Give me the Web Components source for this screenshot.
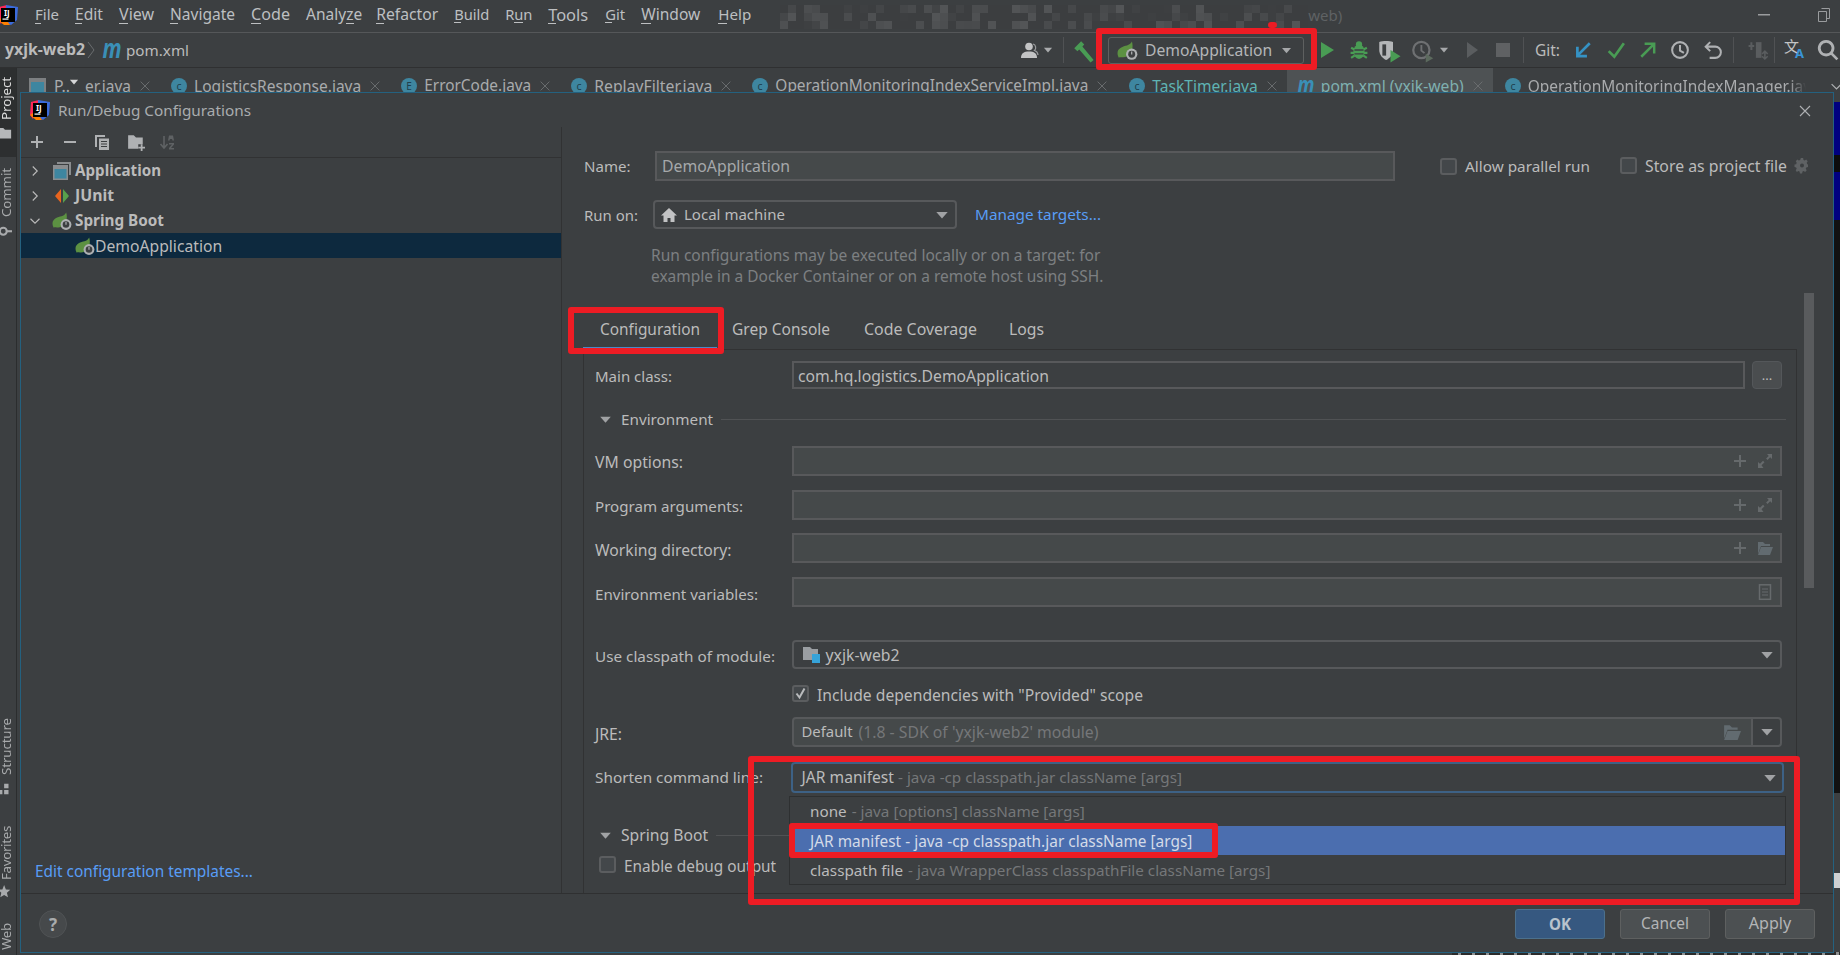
<!DOCTYPE html>
<html lang="en"><head><meta charset="utf-8"><title>Run/Debug Configurations</title>
<style>
html,body{margin:0;padding:0;width:1840px;height:955px;overflow:hidden;background:#3c3f41}
body{font:16px "Noto Sans",sans-serif;color:#bbb}
</style></head>
<body>
<ij-window>
  <ij-menubar></ij-menubar>
  <ij-navbar></ij-navbar>
  <ij-workspace></ij-workspace>

  <ij-dialog>
    <ij-t slot="title" w="193" fs="15.5" style="color:#a9acae">Run/Debug Configurations</ij-t>
    <ij-tree slot="left"></ij-tree>

    <ij-form slot="right">
      <ij-row lw="71" label="Name:" ltw="46.5" style="height:30px;margin:24px 0 0 1px">
        <ij-field style="width:740px;flex:none" bg="#45494a"><ij-t w="128" style="color:#a5a8aa;margin-left:1px">DemoApplication</ij-t></ij-field>
        <ij-check style="margin-left:45px" tw="125">Allow parallel run</ij-check>
        <ij-check style="margin-left:30px" tw="142">Store as project file</ij-check>
        <ij-icon name="gear" w="16" style="margin-left:7px;color:#5f6264"></ij-icon>
      </ij-row>
      <ij-row lw="69" label="Run on:" ltw="54" style="height:29px;margin:19px 0 0 1px">
        <ij-combo style="width:304px;flex:none" icon="home"><ij-t w="101" style="margin-left:1px">Local machine</ij-t></ij-combo>
        <ij-link style="margin-left:18px" tw="126">Manage targets...</ij-link>
      </ij-row>
      <ij-hint style="margin:16px 0 0 68px">
        <ij-t w="449" fs="15">Run configurations may be executed locally or on a target: for</ij-t>
        <ij-t w="452" fs="15">example in a Docker Container or on a remote host using SSH.</ij-t>
      </ij-hint>
      <ij-tabs></ij-tabs>
      <ij-panel>
        <ij-row lw="197" label="Main class:" ltw="77" ldy="1" style="height:28px">
          <ij-field><ij-t w="251" style="color:#bbb;margin-top:2px">com.hq.logistics.DemoApplication</ij-t></ij-field>
          <ij-morebtn></ij-morebtn>
        </ij-row>
        <ij-section tw="92" style="margin-top:20.5px">Environment</ij-section>
        <ij-row lw="197" label="VM options:" ltw="88" ldy="1" style="height:30px;margin-top:16.5px">
          <ij-field bg="#45494a"><ij-fieldicons slot="icons" a="plus" b="expand"></ij-fieldicons></ij-field>
        </ij-row>
        <ij-row lw="197" label="Program arguments:" ltw="148" ldy="1" style="height:30px;margin-top:14px">
          <ij-field bg="#45494a"><ij-fieldicons slot="icons" a="plus" b="expand"></ij-fieldicons></ij-field>
        </ij-row>
        <ij-row lw="197" label="Working directory:" ltw="136.5" ldy="2" style="height:30px;margin-top:13px">
          <ij-field bg="#45494a"><ij-fieldicons slot="icons" a="plus" b="folderopen"></ij-fieldicons></ij-field>
        </ij-row>
        <ij-row lw="197" label="Environment variables:" ltw="163" ldy="2" style="height:30px;margin-top:14px">
          <ij-field bg="#45494a"><ij-fieldicons slot="icons" b="clip"></ij-fieldicons></ij-field>
        </ij-row>
        <ij-row lw="197" label="Use classpath of module:" ltw="180" ldy="1" style="height:29px;margin-top:33px">
          <ij-combo icon="modfolder" arrow><ij-t w="74" style="margin:2px 0 0 -1px">yxjk-web2</ij-t></ij-combo>
        </ij-row>
        <ij-row lw="197" label="" style="height:17px;margin-top:16px">
          <ij-check checked tw="326" tdy="2">Include dependencies with "Provided" scope</ij-check>
        </ij-row>
        <ij-row lw="197" label="JRE:" ltw="27" ldy="2" style="height:30px;margin-top:15px">
          <ij-combo bg="#45494a" split>
            <ij-t w="51">Default</ij-t><ij-t w="240" style="color:#757779;margin-left:6px">(1.8 - SDK of 'yxjk-web2' module)</ij-t>
          </ij-combo>
        </ij-row>
        <ij-row lw="197" label="Shorten command line:" ltw="168" ldy="-1" style="height:31px;margin-top:15px">
          <ij-combo focus arrow>
            <ij-t w="92.5">JAR manifest</ij-t><ij-t w="284" style="color:#757779;margin-left:4px">- java -cp classpath.jar className [args]</ij-t>
          </ij-combo>
        </ij-row>
        <ij-section tw="87" style="margin-top:32px">Spring Boot</ij-section>
        <ij-row lw="4" label="" style="height:17px;margin-top:11px">
          <ij-check tw="152" tdy="3">Enable debug output</ij-check>
        </ij-row>
      </ij-panel>
    </ij-form>

    <ij-footer slot="footer"></ij-footer>
  </ij-dialog>

  <ij-popup>
    <ij-option><ij-t w="36.6">none</ij-t><ij-t w="233" style="color:#757779;margin-left:5px">- java [options] className [args]</ij-t></ij-option>
    <ij-option selected><ij-t w="382" style="color:#d4dbe8;margin-top:3px">JAR manifest - java -cp classpath.jar className [args]</ij-t></ij-option>
    <ij-option><ij-t w="93" style="margin-top:2px">classpath file</ij-t><ij-t w="362" style="color:#757779;margin:2px 0 0 5px">- java WrapperClass classpathFile className [args]</ij-t></ij-option>
  </ij-popup>

  <ij-mark style="left:1096px;top:28px;width:221px;height:42px"></ij-mark>
  <ij-mark style="left:1268px;top:22px;width:9px;height:6px;border-width:3px;background:#ed1c24"></ij-mark>
  <ij-mark style="left:568px;top:307px;width:156px;height:47px"></ij-mark>
  <ij-mark style="left:748px;top:756px;width:1052px;height:149px"></ij-mark>
  <ij-mark style="left:789px;top:823px;width:429px;height:35px"></ij-mark>
</ij-window>

<script>
const cv=document.createElement('canvas').getContext('2d');
const def=(tag,tpl,after)=>customElements.define(tag,class extends HTMLElement{
  connectedCallback(){
    if(this.shadowRoot)return;
    this.attachShadow({mode:'open'}).innerHTML=tpl(this);
    if(after)after(this);
  }
});

/* text that fits a measured width */
customElements.define('ij-t',class extends HTMLElement{
  connectedCallback(){
    if(this.shadowRoot)return;
    this.attachShadow({mode:'open'}).innerHTML='<style>:host{display:inline-block;white-space:pre;line-height:1.2;flex:none}</style><slot></slot>';
    const fs=+(this.getAttribute('fs')||16), b=this.hasAttribute('b')?700:400, w=+this.getAttribute('w'), s=this.textContent;
    let f=fs;
    if(w){
      cv.font=`${b} ${fs}px "Noto Sans"`;
      f=Math.max(fs*.92,Math.min(fs*1.06,fs*w/cv.measureText(s).width));
      cv.font=`${b} ${f}px "Noto Sans"`;
      this.style.letterSpacing=((w-cv.measureText(s).width)/s.length).toFixed(3)+'px';
    }
    this.style.fontSize=f.toFixed(2)+'px';
    if(b==700)this.style.fontWeight=700;
  }
});

const S=(d,x='')=>`<path d="${d}" fill="none" stroke="currentColor" ${x}/>`;
const ICONS={
 plus:S('M8 2v12M2 8h12','stroke-width="2"'),
 minus:S('M2 8h12','stroke-width="2"'),
 x:S('M3 3l10 10M13 3L3 13','stroke-width="1.1"'),
 tri:'<path d="M1.5 4.5h13L8 12z" fill="currentColor"/>',
 chevr:S('M5 2l6 6-6 6','stroke-width="1.5"'),
 chevd:S('M2 5l6 6 6-6','stroke-width="1.5"'),
 crumb:S('M5 0l6 8-6 8','stroke-width="1"'),
 copy:'<path d="M1 1h10v2H3v10H1z" fill="currentColor"/><path d="M5 4.5h10V16H5z" fill="currentColor"/><path d="M7 7h6v1H7zM7 9.5h6v1H7zM7 12h6v1H7z" fill="#3c3f41"/>',
 folderplus:'<path d="M1 2h5l2 2h6v6h-4v4H1z" fill="currentColor"/><path d="M13 10v6M10 13h6" stroke="currentColor" stroke-width="1.6"/>',
 sortaz:'<path d="M5 2v11M1.5 10l3.5 4 3.5-4" fill="none" stroke="currentColor" stroke-width="1.6"/><path d="M10 1.5h4l1 5h-1.6l-.3-1.5h-2.2L10.600 6.500H9zM10 9h5v1.500L12 14h3v1.500h-5V14l3-3.500h-3z" fill="currentColor"/>',
 app:'<path d="M4 0h14v13h-2V2H4z" fill="#8a8d8f"/><rect x="0" y="3" width="15" height="15" fill="#8a8d8f"/><rect x="1.500" y="7" width="12" height="9.500" fill="#3e86a0"/>',
 tabapp:'<rect x="0" y="1" width="17" height="17" fill="#7d8082"/><rect x="2" y="5" width="13" height="11" fill="#3e86a0"/>',
 junit:'<path d="M7 1L7 15 1 8z" fill="#e8641e"/><path d="M9 1L9 15 15 8z" fill="#58a04c"/>',
 spring:'<path d="M0.500 11.500C.5 6.500 6 5 9.500 4.200 11.500 3.700 13.200 2.500 14.200 .5 15 3 15 6 14.500 8 13 14 8.500 15.500 5 15.500 3.500 15.500 2.500 15 1.800 15.800 1 14.500.5 13 .5 11.500Z" fill="#5c9142"/><circle cx="14" cy="12.500" r="5.400" fill="#aeb0b2"/><circle cx="14" cy="12.500" r="3.300" fill="#3c3f41"/><path d="M14 10v2.800" stroke="#aeb0b2" stroke-width="1.200"/>',
 user:'<circle cx="8" cy="4.500" r="3.800" fill="#c3c4c5"/><path d="M0 16c0-5 3-6.500 8-6.500s8 1.500 8 6.500z" fill="#c3c4c5"/><path d="M12 2c3 .5 3.500 5 1.500 6.500 2 .6 3.300 2 3.500 4.500" fill="none" stroke="#9a9c9e" stroke-width="1.200"/>',
 hammer:'<path d="M1 6.500L6.500 1 9 3.500 7.500 5.200 16.500 16 14 18 5 7.500 3.500 9z" fill="#499c54"/>',
 run:'<path d="M2 0l13 8-13 8z" fill="#499c54"/>',
 bug:'<ellipse cx="8" cy="9.500" rx="5" ry="6.500" fill="#499c54"/><circle cx="8" cy="3" r="2.800" fill="#499c54"/><path d="M1 6l3 1.500M15 6l-3 1.500M.5 10.500h3.500M15.500 10.500H12M1 15l3-2M15 15l-3-2" stroke="#499c54" stroke-width="2" fill="none"/><path d="M4 8h8M4 11.500h8" stroke="#3c3f41" stroke-width="1.200"/>',
 cov:'<path d="M1 1.500C4 .5 9 .5 12 1.500V8C12 12 9 15 6.500 16 4 15 1 12 1 8z" fill="#b4b6b8"/><path d="M3.500 3.500h3v9h-3z" fill="#3c3f41"/><path d="M10 8l8 5-8 5z" fill="#499c54"/>',
 prof:'<circle cx="7.500" cy="8" r="6.500" fill="none" stroke="#6e7072" stroke-width="1.800"/><path d="M7.500 4v4.500L10 10.500" fill="none" stroke="#6e7072" stroke-width="1.500"/><path d="M11 11l6 3.500-6 3.500z" fill="#5c6a5e"/>',
 play:'<path d="M3 0l11 8-11 8z" fill="#5a5d5f"/>',
 stop:'<rect x="1" y="1" width="14" height="14" fill="#5f6163"/>',
 dl:S('M14 2L3 13M3 5v8.500h8.500','stroke-width="2.400"'),
 check:S('M1.500 9l5 5 8.500-12','stroke-width="2.400"'),
 up:S('M2 14L13.500 2.500M5 2.500h8.500V11','stroke-width="2.200"'),
 clock:'<circle cx="8" cy="8" r="7" fill="none" stroke="currentColor" stroke-width="1.800"/><path d="M8 3.500V8.500L11.500 10.500" fill="none" stroke="currentColor" stroke-width="1.800"/>',
 undo:S('M5.500 1L1.500 5l4 4M1.500 5H10a4.800 4.800 0 0 1 0 10H5','stroke-width="1.800"'),
 branch:'<rect x="7" y="1" width="5" height="14" fill="#5a5d5f"/><path d="M3 1v7M.5 4.500h5" stroke="#5a5d5f" stroke-width="1.800"/><path d="M15 9v7M12.500 13.500L15 16l2.500-2.500M12.500 11.500L15 9l2.500 2.500" fill="none" stroke="#5a5d5f" stroke-width="1.400"/>',
 search:S('M6.500 1a5.500 5.500 0 1 0 .01 0zM10.500 10.500L15.500 15.500','stroke-width="2.200"'),
 home:'<path d="M8 1L0 8.500h2.500V15h4v-4h3v4h4V8.500H16z" fill="#c2c3c4"/>',
 gear:'<path d="M6.500 0h3l.5 2.300 1.600.7 2-1.300 2 2.100-1.300 2 .7 1.500L16 7.800v2.800l-2.300.6-.7 1.500 1.300 2-2.100 2-2-1.200-1.500.6-.6 2.300H5.300l-.6-2.300-1.600-.6-2 1.200-1.500-2L.900 12.700l-.7-1.500L-2 10.600V7.800l2.200-.5.700-1.500L-.3 3.800l2-2.100 2 1.300L5.500 2.300z" transform="translate(2 0) scale(.75 .84)" fill="currentColor"/><circle cx="8" cy="7.500" r="2" fill="#3c3f41"/>',
 expand:'<path d="M10 1h5v5l-1.800-1.700-2.700 2.700-1.400-1.400 2.700-2.700z" fill="currentColor"/><path d="M1 15v-6l2 1.800 3-3 1.500 1.500-3 3L6.500 15z" fill="currentColor"/>',
 folderopen:'<path d="M1 2h5l2 2h5v2H4L1 14z" fill="#626b70"/><path d="M4 7h12l-3 8H1z" fill="#626b70"/>',
 clip:'<rect x="2.500" y=".8" width="11" height="14.500" fill="none" stroke="currentColor" stroke-width="1.500"/><path d="M5 5h6M5 8h6M5 11h6" stroke="currentColor" stroke-width="1"/>',
 modfolder:'<path d="M0 1h7l2 2h6v11H0z" fill="#9a9ea2"/><rect x="9" y="8" width="8" height="9" fill="#36a3d9"/>',
 folder:'<path d="M0 1h6l2 2h7v10H0z" fill="currentColor"/>',
 commit:'<circle cx="6" cy="6" r="4" fill="none" stroke="currentColor" stroke-width="2.400"/><path d="M10 6h6" stroke="currentColor" stroke-width="2.400"/>',
 struct:'<path d="M0 9h5v5H0zM7 2h5v5H7zM7 9h5v5H7z" fill="currentColor"/>',
 star:'<path d="M7 0l2 5 5 .4-3.800 3.400 1.200 5.200L7 11.300 2.600 14l1.200-5.200L0 5.400 5 5z" fill="currentColor"/>',
 cls:'<circle cx="8" cy="8" r="8" fill="#3e86a0"/><text x="8" y="11.500" text-anchor="middle" font-size="10.500" font-family="Noto Sans" fill="#1f3f4d">c</text>',
 enm:'<circle cx="8" cy="8" r="8" fill="#3e86a0"/><text x="8" y="11.500" text-anchor="middle" font-size="10" font-family="Noto Sans" fill="#1f3f4d">E</text>',
 mvn:'<text x="8" y="15" text-anchor="middle" font-size="24" font-weight="700" font-style="italic" font-family="Noto Sans" fill="#3a8fb7" textLength="17" lengthAdjust="spacingAndGlyphs">m</text>',
 ij:'<path d="M1 2L9 0 7 9 3 19 0 15z" fill="#fe2857"/><path d="M8 0l12 2-1 13-6 5-5-2z" fill="#3b6bdc"/><path d="M0 15l6 5h6l-6-9z" fill="#ff8100"/><rect x="3" y="3" width="14" height="14" fill="#000"/><text x="6" y="10.500" font-size="8" font-weight="700" font-family="Noto Sans" fill="#fff">IJ</text><rect x="4.500" y="13.500" width="6" height="1.200" fill="#fff"/>',
 trans:'<text x="0" y="13" font-size="15" font-family="Noto Sans CJK SC" fill="#c3c4c5">文</text><text x="11" y="19" font-size="13" font-weight="700" font-family="Noto Sans" fill="#3a95d8">A</text>'
};
def('ij-icon',el=>{
  const w=+(el.getAttribute('w')||16), h=+(el.getAttribute('h')||w), vb=el.getAttribute('vb')||'0 0 16 16';
  return `<style>:host{display:inline-flex;flex:none;width:${w}px;height:${h}px}svg{display:block;overflow:visible}</style>
  <svg xmlns="http://www.w3.org/2000/svg" width="${w}" height="${h}" viewBox="${vb}">${ICONS[el.getAttribute('name')]||''}</svg>`;
});

def('ij-window',()=>`<style>:host{display:flex;flex-direction:column;position:relative;width:1840px;height:955px;overflow:hidden;background:#3c3f41}</style><slot></slot>`);

def('ij-pixels',()=>{
  let seed=7,o='';
  const cols=66,rows=3;
  for(let i=0;i<cols*rows;i++){
    seed=(seed*131+17)%1009;
    const r=seed%100, v=r>55?60+(r%24):60;
    o+=`<i style="background:rgb(${v},${v+2},${v+4})"></i>`;
  }
  return `<style>:host{display:grid;grid-template-columns:repeat(${cols},8px);grid-auto-rows:8px;flex:none}i{display:block}</style>${o}`;
});

def('ij-menubar',()=>{
  const items=[['File',24,0],['Edit',28,0],['View',35,0],['Navigate',65,0],['Code',39,0],['Analyze',56,5],['Refactor',62,0,-2],['Build',35,0],['Run',27,1],['Tools',40,0],['Git',20,0,1],['Window',59,0],['Help',33,0,2]];
  return `<style>:host{display:flex;align-items:center;flex:none;height:29px;padding-bottom:3px;border-bottom:1px solid #555759;gap:16px;color:#bdbfc1}
  ij-pixels{margin:4px 0 0 13px}.w{position:relative;display:inline-flex;flex:none}.bar{position:absolute;bottom:0;height:1px;background:#bdbfc1}
  .end{font-size:15px;color:#5f6264;margin-left:-16px;flex:none}
  .r{margin-left:auto;display:flex;align-items:center;color:#9a9c9e}</style>
  <ij-icon name="ij" w="20" vb="0 0 20 20" style="margin-left:-2px;margin-right:1px"></ij-icon>
  ${items.map(([t,w,u,m])=>{const lw=w/t.length;return `<span class="w" style="margin-left:${m||0}px"><ij-t w="${w}">${t}</ij-t><i class="bar" style="left:${(u*lw).toFixed(1)}px;width:${(lw).toFixed(1)}px"></i></span>`}).join('')}
  <ij-pixels></ij-pixels>
  <span class="end">web)</span>
  <span class="r"><svg width="12" height="2" style="margin-right:48px"><rect width="12" height="1.500" fill="#9a9c9e"/></svg><svg width="12" height="14" style="margin-right:10px"><path d="M3.500 .5h8v10h-3M.5 3.500h8v10h-8z" fill="none" stroke="#9a9c9e"/></svg></span>`;
});

const SEP=m=>`<i class="sep" style="margin-left:${m}px"></i>`;
const IC=(n,w,m,c,h,vb)=>`<ij-icon name="${n}" w="${w}" ${h?`h="${h}"`:''} ${vb?`vb="${vb}"`:''} style="margin-left:${m}px;${c?`color:${c}`:''}"></ij-icon>`;
def('ij-navbar',()=>`<style>:host{display:flex;align-items:center;flex:none;height:34px;border-bottom:1px solid #2f3031}
 .sep{display:block;width:1px;height:26px;background:#505254;flex:none}
 .crumb{display:flex;align-items:center;flex:none}
 .r{display:flex;align-items:center;margin-left:auto;padding-right:2px}
 .combo{display:flex;align-items:center;box-sizing:border-box;width:196px;height:27px;margin-left:15px;border:1px solid #5e6060;border-radius:3px;flex:none}
</style>
 <span class="crumb" style="margin-left:5px"><ij-t w="80" b>yxjk-web2</ij-t>
 ${IC('crumb',8,2,'#6a6d6f',16,'4 0 8 16')}${IC('mvn',18,8)}<ij-t w="63" style="margin-left:5px">pom.xml</ij-t></span>
 <span class="r">
  ${IC('user',16,0)}${IC('tri',10,6,'#a9abad')}${SEP(10)}${IC('hammer',20,9)}
  <span class="combo">${IC('spring',21,8,'',19,'0 0 20 18')}<ij-t w="127" style="margin-left:7px;color:#b4b6b8">DemoApplication</ij-t>${IC('tri',11,9,'#a6a8aa')}</span>
  ${IC('run',16,15)}${IC('bug',18,15)}${IC('cov',20,10)}${IC('prof',20,14)}${IC('tri',10,7,'#a6a8aa')}${IC('play',16,15)}${IC('stop',16,15)}${SEP(12)}
  <ij-t w="25" style="margin-left:11px">Git:</ij-t>
  ${IC('dl',18,14,'#3592c4')}${IC('check',18,15,'#499c54')}${IC('up',18,14,'#499c54')}${IC('clock',18,14,'#afb1b3')}${IC('undo',18,15,'#afb1b3')}${SEP(11)}${IC('branch',18,14)}${SEP(8)}
  ${IC('trans',22,9,'',22,'0 0 22 22')}${IC('search',20,12,'#afb1b3')}
 </span>`);

def('ij-workspace',()=>`<style>:host{display:flex;flex:1;min-height:0}ij-editor{flex:1;min-width:0}</style>
 <ij-stripes></ij-stripes><ij-editor></ij-editor>`);

def('ij-stripe',el=>{
  const a=el.hasAttribute('active');
  return `<style>:host{display:flex;flex-direction:column;align-items:flex-start;flex:none;color:${a?'#dcdcdc':'#a8aaac'}}
   .v{writing-mode:vertical-rl;transform:rotate(180deg);width:12px;display:flex;justify-content:center}
   ij-t{line-height:12px}
   ij-icon{margin-top:${el.getAttribute('ig')||8}px;color:${a?'#b5b7b9':'#a8aaac'}}</style>
   <span class="v"><ij-t w="${el.getAttribute('tw')}" fs="14.5">${el.getAttribute('label')}</ij-t></span>
   ${el.getAttribute('icon')?`<ij-icon name="${el.getAttribute('icon')}" w="14" style="margin-left:-2px"></ij-icon>`:''}`;
});
def('ij-stripes',()=>`<style>:host{display:flex;flex-direction:column;flex:none;width:17px;border-right:1px solid #2b2d2e;box-sizing:border-box;overflow:hidden}
 .a{background:#2d2f30;height:89px;padding-top:9px;box-sizing:border-box;flex:none}</style>
 <div class="a"><ij-stripe active label="Project" tw="43" icon="folder" ig="7"></ij-stripe></div>
 <ij-stripe label="Commit" tw="49" icon="commit" ig="9" style="margin-top:11px"></ij-stripe>
 <span style="flex:1"></span>
 <ij-stripe label="Structure" tw="57" icon="struct" ig="7"></ij-stripe>
 <ij-stripe label="Favorites" tw="54" icon="star" ig="5" style="margin-top:30px"></ij-stripe>
 <ij-stripe label="Web" tw="27" style="margin:24px 0 5px"></ij-stripe>`);

def('ij-tab',el=>{
  const act=el.hasAttribute('active'), col=el.getAttribute('color')||'#a9abad';
  const clip=el.getAttribute('clip'), iw=el.getAttribute('iw')||16;
  return `<style>:host{display:flex;align-items:center;flex:none;height:36px;padding:0 8px 0 11px;box-sizing:border-box;${act?'background:#4e5254':''};color:${col}}
  .t{display:inline-flex;margin-left:7px;${clip?`width:${clip}px;overflow:hidden;-webkit-mask-image:linear-gradient(90deg,#000 94%,transparent)`:''}}
  .x{margin-left:7px;color:#6a6d6f}</style>
  <ij-icon name="${el.getAttribute('icon')}" w="${iw}" vb="0 0 ${iw} ${iw}"></ij-icon>
  <span class="t"><slot></slot></span>
  ${clip?'':`<ij-icon class="x" name="x" w="14"></ij-icon>`}`;
});
def('ij-editor',()=>`<style>:host{display:flex;flex-direction:column;min-height:0}
 .bar{display:flex;height:36px;flex:none;margin-bottom:-2px;overflow:hidden;position:relative}
 .body{flex:1;display:flex;flex-direction:column;align-items:flex-end;min-height:0}
 .s{display:block;width:6px;flex:none}
 .foot{height:3px;flex:none;margin-left:1435px;background:repeating-linear-gradient(90deg,#2b2b2b 0 6px,#8d8f90 6px 9px,#2b2b2b 9px 14px)}
</style>
 <div class="bar">
  <ij-tab icon="tabapp" iw="18" style="padding-left:12px"><ij-t w="16">P..</ij-t><ij-icon name="tri" w="10" style="color:#d5d6d7;margin:0 6.5px 0 -1.5px"></ij-icon><ij-t w="46">er.java</ij-t></ij-tab>
  <ij-tab icon="cls"><ij-t w="167">LogisticsResponse.java</ij-t></ij-tab>
  <ij-tab icon="enm"><ij-t w="107">ErrorCode.java</ij-t></ij-tab>
  <ij-tab icon="cls"><ij-t w="118">ReplayFilter.java</ij-t></ij-tab>
  <ij-tab icon="cls"><ij-t w="313">OperationMonitoringIndexServiceImpl.java</ij-t></ij-tab>
  <ij-tab icon="cls" color="#5fb3b3" style="margin-left:1px"><ij-t w="105.4">TaskTimer.java</ij-t></ij-tab>
  <ij-tab icon="mvn" active color="#7fb0b0"><ij-t w="143">pom.xml (yxjk-web)</ij-t></ij-tab>
  <ij-tab icon="cls" clip="278" style="margin-left:1px"><ij-t w="292">OperationMonitoringIndexManager.java</ij-t></ij-tab>
  <ij-icon name="chevd" w="13" style="margin:12px 0 0 16px;color:#afb1b3"></ij-icon>
 </div>
 <div class="body">
  <i class="s" style="height:53px;background:#000080"></i>
  <i class="s" style="height:17px;background:#0c0c0c"></i>
  <i class="s" style="height:48px;background:#000080"></i>
  <i class="s" style="height:573px;background:#111"></i>
  <i class="s" style="height:80px;background:#3c3f41"></i>
  <i class="s" style="height:15px;background:#cfd0d1"></i>
  <span style="flex:1"></span>
 </div>
 <div class="foot"></div>`);

def('ij-dialog',()=>`<style>:host{position:absolute;left:20px;top:92px;width:1814px;height:861px;box-sizing:border-box;border:1px solid #24617f;background:#3c3f41;display:flex;flex-direction:column}
 .title{display:flex;align-items:center;height:34px;flex:none;position:relative}
 .close{position:absolute;right:20px;top:10px;color:#afb1b3}
 .body{flex:1;display:flex;min-height:0;border-bottom:1px solid #2f3031}
 .l{width:540px;flex:none;border-right:1px solid #313233;display:flex;flex-direction:column}
 .r{flex:1;min-width:0;position:relative;overflow:hidden}
 .thumb{position:absolute;right:19px;top:166px;width:10px;height:295px;background:#595b5d}
</style>
 <div class="title"><ij-icon name="ij" w="20" vb="0 0 20 20" style="margin:0 8px 0 9px"></ij-icon><slot name="title"></slot>
 <ij-icon class="close" name="x" w="16"></ij-icon></div>
 <div class="body"><div class="l"><slot name="left"></slot></div><div class="r"><slot name="right"></slot><div class="thumb"></div></div></div>
 <slot name="footer"></slot>`);

def('ij-treerow',el=>{
  const ar=el.getAttribute('arrow');
  return `<style>:host{display:flex;align-items:center;height:25px;flex:none;${el.hasAttribute('selected')?'background:#0d293e;':''}color:#bbb}
   .a{margin-left:8px}.ic{display:flex;width:20px;justify-content:center;flex:none}</style>
   <span style="width:${el.getAttribute('ind')||31}px;flex:none;display:flex;align-items:center">${ar?`<ij-icon class="a" name="${ar}" w="12"></ij-icon>`:''}</span>
   <span class="ic"><slot name="i"></slot></span><slot></slot>`;
});
def('ij-tree',()=>`<style>:host{display:flex;flex-direction:column;flex:1;min-height:0}
 .tb{display:flex;align-items:center;height:30px;flex:none;border-bottom:1px solid #313233;box-sizing:content-box;color:#afb1b3}
 .f{flex:1}.link{padding:0 0 11px 14px;color:#589df6}
</style>
 <div class="tb">
  <ij-icon name="plus" w="16" style="margin-left:8px"></ij-icon>
  <ij-icon name="minus" w="16" style="margin-left:17px"></ij-icon>
  <ij-icon name="copy" w="16" style="margin-left:16px"></ij-icon>
  <ij-icon name="folderplus" w="18" style="margin-left:17px"></ij-icon>
  <ij-icon name="sortaz" w="16" style="margin-left:14px;color:#5f6264"></ij-icon>
 </div>
 <ij-treerow arrow="chevr"><ij-icon slot="i" name="app" w="18"  vb="0 0 18 18"></ij-icon><ij-t w="86" b style="margin-left:3px">Application</ij-t></ij-treerow>
 <ij-treerow arrow="chevr"><ij-icon slot="i" name="junit" w="16"></ij-icon><ij-t w="39" b style="margin-left:3px">JUnit</ij-t></ij-treerow>
 <ij-treerow arrow="chevd"><ij-icon slot="i" name="spring" w="20" h="18" vb="0 0 20 18"></ij-icon><ij-t w="89" b style="margin-left:3px">Spring Boot</ij-t></ij-treerow>
 <ij-treerow selected ind="54"><ij-icon slot="i" name="spring" w="20" h="18" vb="0 0 20 18"></ij-icon><ij-t w="127" style="margin-top:2px">DemoApplication</ij-t></ij-treerow>
 <span class="f"></span>
 <div class="link"><ij-t w="218">Edit configuration templates...</ij-t></div>`);

def('ij-form',()=>`<style>:host{padding-left:21px;height:100%;box-sizing:border-box;display:flex;flex-direction:column}</style><slot></slot>`);
def('ij-row',el=>{
  const l=el.getAttribute('label'), tw=el.getAttribute('ltw'), d=+(el.getAttribute('ldy')||0);
  return `<style>:host{display:flex;align-items:center;flex:none}.l{flex:none;width:${el.getAttribute('lw')}px;color:#bbb;margin-top:${2*d}px}</style>
  <span class="l">${l?`<ij-t w="${tw}">${l}</ij-t>`:''}</span><slot></slot>`;
});
def('ij-field',el=>`<style>:host{flex:1;min-width:0;align-self:stretch;display:flex;align-items:center;box-sizing:border-box;border:2px solid #58595b;padding:0 6px 0 4px;background:${el.getAttribute('bg')||'transparent'}}
 .s{flex:1;display:flex}</style><span class="s"><slot></slot></span><slot name="icons"></slot>`);
def('ij-fieldicons',el=>`<style>:host{display:flex;align-items:center;color:#666a6c}</style>
 ${el.getAttribute('a')?`<ij-icon name="${el.getAttribute('a')}" w="16"></ij-icon>`:''}
 <ij-icon name="${el.getAttribute('b')}" w="16" style="margin-left:9px;margin-right:1px"></ij-icon>`);
def('ij-morebtn',()=>`<style>:host{flex:none;width:30px;height:28px;margin-left:7px;box-sizing:border-box;border:1px solid #54575a;border-radius:4px;background:#4a4d4f;display:flex;align-items:flex-end;justify-content:center;font-size:13px;line-height:1;padding-bottom:6px;color:#bbb}</style>...`);
def('ij-combo',el=>{
  const f=el.hasAttribute('focus'), sp=el.hasAttribute('split'), ic=el.getAttribute('icon'), ar=el.hasAttribute('arrow');
  const isHome=ic=='home', w=ic=='modfolder'?19:16;
  return `<style>:host{flex:1;min-width:0;align-self:stretch;display:flex;align-items:center;box-sizing:border-box;position:relative;
   border:${f?'2px solid #3d6185':'2px solid #57595b'};border-radius:4px;background:${el.getAttribute('bg')||'transparent'};padding-left:${isHome?6:(f?9:7.5)}px;${f?'margin:0 -1.5px;':''}}
   .s{flex:1;display:flex;align-items:center;min-width:0}
   .a{position:absolute;right:${f?5:6}px;top:50%;margin-top:-7px;color:#a0a2a4}
   .d{display:flex;width:27px;align-self:stretch;align-items:center;justify-content:center;border-left:2px solid #57595b;background:#3c3f41;color:#a0a2a4;border-radius:0 3px 3px 0}
   .fo{margin-right:10px}
  </style>
  ${ic?`<ij-icon name="${ic}" w="${w}" ${ic=='modfolder'?'h="17" vb="0 0 17 17"':''} style="margin-right:6px"></ij-icon>`:''}
  <span class="s"><slot></slot></span>
  ${sp?`<ij-icon class="fo" name="folderopen" w="18"></ij-icon><span class="d"><ij-icon name="tri" w="14"></ij-icon></span>`:(ar||isHome?`<ij-icon class="a" name="tri" w="14"></ij-icon>`:'')}`;
});
def('ij-check',el=>{
  const c=el.hasAttribute('checked'), d=+(el.getAttribute('tdy')||0);
  return `<style>:host{display:flex;align-items:center;flex:none;color:#bbb}
   .b{width:17px;height:17px;box-sizing:border-box;border:2px solid #5b5d5f;border-radius:3px;margin-right:8px;flex:none;background:#43474a;display:flex}
   svg{display:block}ij-t{margin-top:${2*d}px}</style>
   <span class="b">${c?'<svg width="13" height="13" viewBox="0 0 13 13"><path d="M2.500 6.500l3 4 5-9" fill="none" stroke="#b9bbbd" stroke-width="2"/></svg>':''}</span>
   <ij-t w="${el.getAttribute('tw')}">${el.textContent}</ij-t>`;
});
def('ij-link',el=>`<style>:host{color:#589df6;display:inline-flex;flex:none}</style><ij-t w="${el.getAttribute('tw')}">${el.textContent}</ij-t>`);
def('ij-hint',()=>`<style>:host{display:flex;flex-direction:column;align-items:flex-start;color:#7c7f81;flex:none}::slotted(*){height:21px;line-height:21px!important}</style><slot></slot>`);
def('ij-tabs',()=>`<style>:host{display:flex;flex:none;height:37px;margin-top:26px;width:1214px;box-sizing:border-box;border-bottom:1px solid #313233}
 .t{display:flex;align-items:center;padding:0 17px 3px 17px;height:33px;flex:none;color:#bbb}
 .a{box-shadow:inset 0 -2px 0 #4a88c7;height:34px;padding-bottom:2px;box-sizing:content-box}
</style>
 <span class="t a"><ij-t w="100">Configuration</ij-t></span>
 <span class="t" style="padding-left:15px"><ij-t w="98">Grep Console</ij-t></span>
 <span class="t"><ij-t w="113">Code Coverage</ij-t></span>
 <span class="t" style="padding-left:15px"><ij-t w="35">Logs</ij-t></span>`);
def('ij-panel',()=>`<style>:host{display:flex;flex-direction:column;flex:1;min-height:0;width:1214px;box-sizing:border-box;border:solid #313233;border-width:0 1px;padding:11px 14px 0 11px;overflow:hidden}</style><slot></slot>`);
def('ij-section',el=>`<style>:host{display:flex;align-items:center;flex:none;height:20px;padding-left:4px;margin-right:-4px;color:#bbb}
 .l{flex:1;height:1px;background:#505254;margin-left:8px}</style>
 <ij-icon name="tri" w="13" style="color:#a0a2a4;margin-right:9px"></ij-icon><ij-t w="${el.getAttribute('tw')}">${el.textContent}</ij-t><i class="l"></i>`);
def('ij-popup',()=>`<style>:host{position:absolute;left:789px;top:796px;width:997px;height:89px;box-sizing:border-box;border:1px solid #2e3031;background:#3c3f41;display:flex;flex-direction:column}</style><slot></slot>`);
def('ij-option',el=>`<style>:host{display:flex;align-items:center;height:29px;flex:none;padding-left:20px;color:#bbb;${el.hasAttribute('selected')?'background:#4b6eaf;':''}}</style><slot></slot>`);
def('ij-footer',()=>`<style>:host{display:flex;align-items:center;flex:none;height:58px;padding:0 18px 0 18px}.f{flex:1}
 .q{width:28px;height:28px;border-radius:50%;background:#46494b;border:1px solid #505355;box-sizing:border-box;display:flex;align-items:center;justify-content:center;color:#a9abad;font-weight:700;font-size:17px;margin-top:2px}
 .b{display:flex;margin-top:2px}</style>
 <span class="q">?</span><span class="f"></span>
 <span class="b"><ij-button primary tw="22">OK</ij-button><ij-button tw="48" style="margin-left:15px">Cancel</ij-button><ij-button tw="42.500" style="margin-left:15px">Apply</ij-button></span>`);
def('ij-button',el=>{
  const p=el.hasAttribute('primary');
  return `<style>:host{display:flex;align-items:center;justify-content:center;flex:none;width:90px;height:30px;box-sizing:border-box;border:1px solid ${p?'#4c708c':'#5e6060'};border-radius:3px;background:${p?'#365880':'#4c5052'};color:${p?'#b9c3cc':'#b3b5b7'};}</style>
  <ij-t w="${el.getAttribute('tw')}" ${p?'b':''}>${el.textContent}</ij-t>`;
});
def('ij-mark',()=>`<style>:host{position:absolute;box-sizing:border-box;border:6px solid #ed1c24;border-radius:3px;pointer-events:none}</style>`);
</script>
</body></html>
